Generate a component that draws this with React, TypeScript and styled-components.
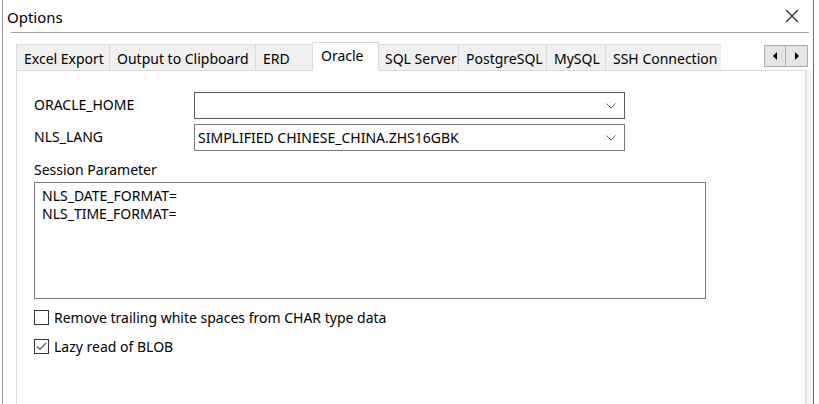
import React from "react";
import styled, { createGlobalStyle } from "styled-components";

const Global = createGlobalStyle`
  html, body { margin: 0; padding: 0; background: #ffffff; }
  body { font-family: "Noto Sans", "Open Sans", sans-serif; color: #000; overflow: hidden; }
`;

const Window = styled.div`
  margin-left: 2px;
  width: 812px;
  height: 404px;
  border-left: 1px solid #9a9a9a;
  border-right: 1px solid #6f6f6f;
  background: #ffffff;
  box-sizing: border-box;
  display: flex;
  flex-direction: column;
  overflow: hidden;
`;

const TitleBar = styled.div`
  height: 33px;
  display: flex;
  align-items: center;
  justify-content: space-between;
  padding: 0 10px 0 0;
  box-sizing: border-box;
  border-bottom: 1px solid #a3a3a3;
  margin: 0 4px 0 8px;
`;

const Title = styled.div`
  font-size: 15px;
  margin-left: -4px;
  margin-top: 1px;
`;

const Body = styled.div`
  flex: 1;
  display: flex;
  flex-direction: column;
  padding: 8px 0 0 13px;
  min-height: 0;
`;

const TabStrip = styled.div`
  display: flex;
  align-items: flex-end;
  height: 29px;
  width: 790px;
`;

const Tab = styled.div<{ $w: number; $active?: boolean }>`
  box-sizing: border-box;
  width: ${(p) => p.$w}px;
  height: ${(p) => (p.$active ? 29 : 26)}px;
  padding-left: ${(p) => (p.$active ? 8 : 7)}px;
  padding-top: ${(p) => (p.$active ? 3 : 4)}px;
  font-size: 14px;
  white-space: nowrap;
  overflow: hidden;
  background: ${(p) => (p.$active ? "#ffffff" : "#f0f0f0")};
  border: 1px solid #d9d9d9;
  border-bottom: ${(p) => (p.$active ? "1px solid #ffffff" : "none")};
  border-right: ${(p) => (p.$active ? "1px solid #d9d9d9" : "none")};
  margin-left: ${(p) => (p.$active ? "-2px" : "0")};
  margin-right: ${(p) => (p.$active ? "-2px" : "0")};
  position: relative;
  z-index: ${(p) => (p.$active ? 2 : 1)};
  margin-bottom: ${(p) => (p.$active ? "-1px" : "0")};
`;

const Scrollers = styled.div`
  display: flex;
  margin-left: auto;
  margin-bottom: 3px;
  margin-right: -2px;
`;

const ScrollBtn = styled.div`
  width: 22px;
  height: 22px;
  box-sizing: border-box;
  background: #e5e5e5;
  border: 1px solid #adadad;
  display: flex;
  align-items: center;
  justify-content: center;
  & + & { border-left: none; }
`;

const Panel = styled.div`
  width: 790px;
  flex: 1;
  box-sizing: border-box;
  border: 1px solid #d9d9d9;
  border-bottom: none;
  background: #ffffff;
  padding: 21px 0 0 17px;
  display: flex;
  flex-direction: column;
  position: relative;
`;

const Field = styled.div`
  display: grid;
  grid-template-columns: 160px 431px;
  align-items: center;
  height: 27px;
  margin-bottom: 5px;
`;

const Label = styled.div`
  font-size: 14px;
  margin-top: -2px;
`;

const Combo = styled.div<{ $dark?: boolean }>`
  box-sizing: border-box;
  height: 27px;
  border: 1px solid ${(p) => (p.$dark ? "#5a5a5a" : "#7a7a7a")};
  display: flex;
  align-items: center;
  padding: 0 8px 0 3px;
  font-size: 14px;
  background: #fff;
`;

const ComboText = styled.div`
  flex: 1;
  white-space: nowrap;
`;

const SectionLabel = styled.div`
  font-size: 14px;
  margin-top: 4px;
  height: 22px;
`;

const TextArea = styled.div`
  width: 672px;
  height: 117px;
  box-sizing: border-box;
  border: 1px solid #7a7a7a;
  padding: 4px 7px;
  font-size: 14px;
  line-height: 18px;
`;

const CheckRow = styled.div<{ $first?: boolean }>`
  display: flex;
  align-items: center;
  gap: 5px;
  margin-top: ${(p) => (p.$first ? 10 : 13)}px;
  font-size: 14px;
  height: 16px;
`;

const Box = styled.div`
  width: 15px;
  height: 15px;
  box-sizing: border-box;
  border: 1px solid #333333;
  background: #fff;
  display: flex;
  align-items: center;
  justify-content: center;
`;

const RightStrip = styled.div`
  position: absolute;
  right: -11px;
  top: -1px;
  bottom: 0;
  width: 9px;
  background: #f6f6f6;
  border-left: 1px solid #e6e6e6;
`;

const Chevron = () => (
  <svg width="10" height="6" viewBox="0 0 10 6">
    <path d="M0.5 0.5 L5 5 L9.5 0.5" fill="none" stroke="#5a5a5a" strokeWidth="1" />
  </svg>
);

const tabs: { t: string; w: number; active?: boolean }[] = [
  { t: "Excel Export", w: 93 },
  { t: "Output to Clipboard", w: 146 },
  { t: "ERD", w: 59 },
  { t: "Oracle", w: 67, active: true },
  { t: "SQL Server", w: 81 },
  { t: "PostgreSQL", w: 88 },
  { t: "MySQL", w: 59 },
  { t: "SSH Connection", w: 116 },
];

export default function App() {
  return (
    <>
      <Global />
      <Window>
        <TitleBar>
          <Title>Options</Title>
          <svg width="14" height="14" viewBox="0 0 14 14">
            <path d="M1 1 L13 13 M13 1 L1 13" stroke="#222" strokeWidth="1.1" />
          </svg>
        </TitleBar>
        <Body>
          <TabStrip>
            {tabs.map((x) => (
              <Tab key={x.t} $w={x.w} $active={x.active}>
                {x.t}
              </Tab>
            ))}
            <Scrollers>
              <ScrollBtn>
                <svg width="5" height="8" viewBox="0 0 5 8">
                  <path d="M4 0 L0 4 L4 8 Z" fill="#000" />
                </svg>
              </ScrollBtn>
              <ScrollBtn>
                <svg width="5" height="8" viewBox="0 0 5 8">
                  <path d="M1 0 L5 4 L1 8 Z" fill="#000" />
                </svg>
              </ScrollBtn>
            </Scrollers>
          </TabStrip>
          <Panel>
            <Field>
              <Label>ORACLE_HOME</Label>
              <Combo $dark>
                <ComboText></ComboText>
                <Chevron />
              </Combo>
            </Field>
            <Field>
              <Label>NLS_LANG</Label>
              <Combo>
                <ComboText>SIMPLIFIED CHINESE_CHINA.ZHS16GBK</ComboText>
                <Chevron />
              </Combo>
            </Field>
            <SectionLabel>Session Parameter</SectionLabel>
            <TextArea>
              <div>NLS_DATE_FORMAT=</div>
              <div>NLS_TIME_FORMAT=</div>
            </TextArea>
            <CheckRow $first>
              <Box />
              <span>Remove trailing white spaces from CHAR type data</span>
            </CheckRow>
            <CheckRow>
              <Box>
                <svg width="11" height="9" viewBox="0 0 11 9">
                  <path d="M1 4.5 L4 7.5 L10 1" fill="none" stroke="#555" strokeWidth="1.2" />
                </svg>
              </Box>
              <span>Lazy read of BLOB</span>
            </CheckRow>
            <RightStrip />
          </Panel>
        </Body>
      </Window>
    </>
  );
}
